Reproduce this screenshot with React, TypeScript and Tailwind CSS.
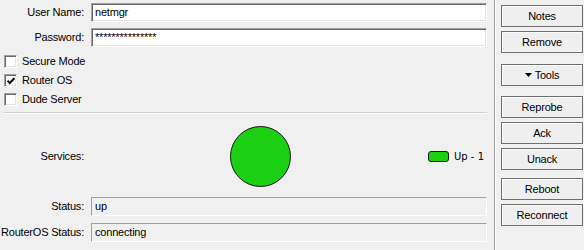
import { ReactNode } from 'react'

function Field({ label, value, disabled }: { label: string; value: string; disabled?: boolean }) {
  return (
    <div className="flex h-[19px] items-center">
      <div className="w-[85px] text-right pr-[1px]">{label}</div>
      <div
        className={
          disabled
            ? 'ml-[6px] flex h-full flex-1 items-center border-t border-l border-t-[#a0a0a0] border-l-[#a0a0a0] border-r border-b border-r-white border-b-white bg-[#f0f0f0] pl-[3px]'
            : 'ml-[6px] flex h-full flex-1 items-center border-t border-l border-t-[#a0a0a0] border-l-[#a0a0a0] border-r border-b border-r-white border-b-white bg-white pl-[3px] shadow-[inset_1px_1px_0_#696969,inset_-1px_-1px_0_#e3e3e3]'
        }
      >
        {value}
      </div>
    </div>
  )
}

function Check({ label, checked }: { label: string; checked?: boolean }) {
  return (
    <div className="flex h-[13px] items-center pl-[4px]">
      <div className="relative h-[13px] w-[13px] border-t border-l border-t-[#a0a0a0] border-l-[#a0a0a0] border-r border-b border-r-white border-b-white bg-white shadow-[inset_1px_1px_0_#696969,inset_-1px_-1px_0_#e3e3e3]">
        {checked && (
          <svg className="absolute left-[2px] top-[2px]" width="8" height="8" viewBox="0 0 8 8">
            <path d="M0.6 3.6 L2.8 6 L7.4 1.2" fill="none" stroke="#000" strokeWidth="2" />
          </svg>
        )}
      </div>
      <span className="ml-[5px]">{label}</span>
    </div>
  )
}

function Btn({ children, className }: { children: ReactNode; className?: string }) {
  return (
    <button
      type="button"
      className={
        'flex h-[22px] w-[82px] items-center justify-center border border-[#6f6f6f] bg-[#efefef] shadow-[inset_1px_1px_0_#fcfcfc] ' +
        (className ?? '')
      }
    >
      {children}
    </button>
  )
}

export default function App() {
  return (
    <div className="flex h-[250px] w-[584px] overflow-hidden bg-[#f0f0f0] font-['Liberation_Sans',Arial,sans-serif] text-[11px] tracking-[-0.2px] text-black">
      {/* left panel */}
      <div className="flex w-[494px] flex-col pr-[7px]">
        <div className="mt-[3px]">
          <Field label="User Name:" value="netmgr" />
        </div>
        <div className="mt-[6px]">
          <Field label="Password:" value="***************" />
        </div>
        <div className="mt-[8px] flex flex-col gap-[6px]">
          <Check label="Secure Mode" />
          <Check label="Router OS" checked />
          <Check label="Dude Server" />
        </div>

        {/* separator */}
        <div className="ml-[4px] mt-[6px] border-t border-b border-t-[#cfcfcf] border-b-white" />

        {/* services */}
        <div className="mt-[12px] flex h-[61px] items-center">
          <div className="w-[85px] text-right pr-[1px]">Services:</div>
          <div className="ml-[145px] h-[61px] w-[61px] rounded-full border border-[#1a1a1a] bg-[#1bcf13]" />
          <div className="ml-auto mr-[3px] flex items-center">
            <div className="h-[11px] w-[21px] rounded-[3px] border border-[#1a1a1a] bg-[#1bcf13]" />
            <span className="ml-[5px] font-['DejaVu_Sans',sans-serif] text-[10px] tracking-normal">
              Up - 1
            </span>
          </div>
        </div>

        <div className="mt-[10px]">
          <Field label="Status:" value="up" disabled />
        </div>
        <div className="mt-[7px]">
          <Field label="RouterOS Status:" value="connecting" disabled />
        </div>
      </div>

      {/* divider */}
      <div className="h-full w-[2px] border-l border-l-[#a0a0a0] border-r border-r-[#fdfdfd]" />

      {/* buttons */}
      <div className="flex flex-col pl-[5px] pt-[5px]">
        <Btn>Notes</Btn>
        <Btn className="mt-[4px]">Remove</Btn>
        <Btn className="mt-[11px]">
          <svg className="mr-[3px]" width="7" height="4" viewBox="0 0 7 4">
            <path d="M0 0 H7 L3.5 4 Z" fill="#000" />
          </svg>
          Tools
        </Btn>
        <Btn className="mt-[10px]">Reprobe</Btn>
        <Btn className="mt-[4px]">Ack</Btn>
        <Btn className="mt-[4px]">Unack</Btn>
        <Btn className="mt-[8px]">Reboot</Btn>
        <Btn className="mt-[4px]">Reconnect</Btn>
      </div>
    </div>
  )
}
